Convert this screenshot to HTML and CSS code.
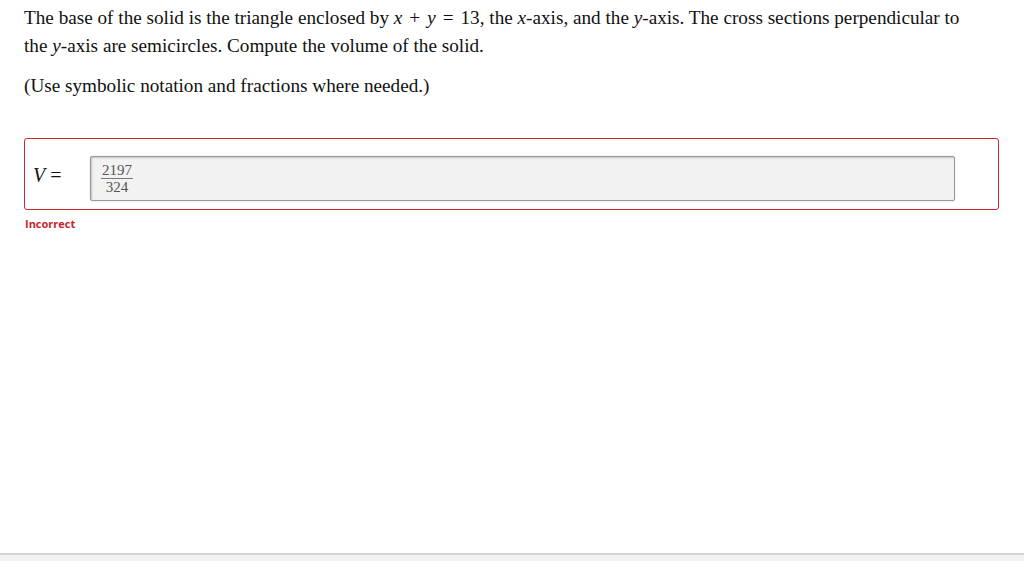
FILE: index.html
```html
<!DOCTYPE html>
<html lang="en">
<head>
    <meta charset="UTF-8">
    <title>Question</title>
    <link rel="stylesheet" href="styles.css">
</head>
<body>

    <div class="question">
        <p>The base of the solid is the triangle enclosed by <span class="math"><i>x</i><span class="op">+</span><i>y</i><span class="op">=</span>13</span>, the <i>x</i>-axis, and the <i>y</i>-axis. The cross sections perpendicular to the <i>y</i>-axis are semicircles. Compute the volume of the solid.</p>
        <p class="hint">(Use symbolic notation and fractions where needed.)</p>
    </div>

    <!-- answer -->
    <div class="answer">
        <span class="label"><i>V</i><span class="op">=</span></span>
        <div class="field">
            <span class="frac">
                <span class="num">2197</span>
                <span class="den">324</span>
            </span>
        </div>
    </div>
    <div class="status">Incorrect</div>

    <div class="footer"></div>
</body>
</html>
```

FILE: styles.css
```css
body {
    margin: 0;
    font-family: "Liberation Serif", "Times New Roman", serif;
    color: #111;
    background: white;
    height: 561px;
    position: relative;
    overflow: hidden;
}
.question {
    padding: 4px 24px 0 24px;
    font-size: 19.2px;
    line-height: 28px;
}
.question p {
    margin: 0;
    max-width: 955px;
}
.question .hint {
    margin-top: 12px;
}
.op {
    margin: 0 7px;
}
.answer {
    margin: 38px 25px 0 24px;
    height: 70px;
    border: 1px solid #d0262a;
    border-radius: 3px;
    display: flex;
    align-items: center;
    padding-left: 8px;
}
.label {
    font-size: 20px;
    width: 57px;
    margin-top: 3px;
}
.label .op {
    margin: 0 5px;
}
.field {
    width: 865px;
    height: 45px;
    margin-top: 9px;
    background: #f2f2f2;
    border: 1px solid #999;
    border-radius: 2px;
    box-shadow: inset 1px 1px 2px rgba(0, 0, 0, 0.2), 0 0 2px rgba(0, 0, 0, 0.15);
    display: flex;
    align-items: center;
    padding-left: 10px;
    box-sizing: border-box;
}
.frac {
    display: inline-flex;
    flex-direction: column;
    align-items: center;
    font-size: 15px;
    line-height: 16px;
    color: #555;
}
.frac .num {
    border-bottom: 1px solid #777;
    padding: 0 1px;
}
.status {
    margin: 6px 0 0 25px;
    font-family: "Open Sans", sans-serif;
    font-size: 11px;
    font-weight: bold;
    color: #c9252b;
}
.footer {
    position: absolute;
    left: 0;
    right: 0;
    bottom: 0;
    height: 6px;
    background: #f2f2f2;
    border-top: 2px solid #d4d4d4;
}
```
